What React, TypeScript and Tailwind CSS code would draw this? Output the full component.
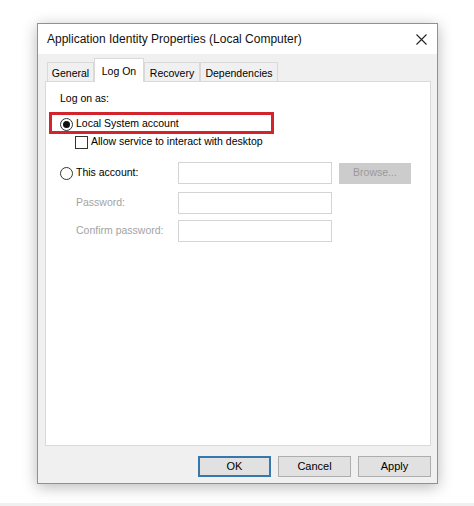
import React from "react";

const font = { fontFamily: '"Liberation Sans", Arial, sans-serif' };

const Radio: React.FC<{ checked?: boolean }> = ({ checked }) => (
	<span className="flex h-[13px] w-[13px] shrink-0 items-center justify-center rounded-full border border-[#333] bg-white">
		{checked && <span className="h-[7px] w-[7px] rounded-full bg-[#111]" />}
	</span>
);

const TextBox: React.FC = () => (
	<div className="h-[22px] w-[154px] border border-[#d4d4d4] bg-white" />
);

const Tab: React.FC<{ label: string; width: string; active?: boolean }> = ({ label, width, active }) =>
	active ? (
		<div className={`relative z-10 -mb-px flex h-[24px] ${width} items-start justify-center border border-b-0 border-[#d9d9d9] bg-white pt-[5px]`}>
			{label}
		</div>
	) : (
		<div className={`flex h-[19px] ${width} items-start justify-center border border-b-0 border-[#d9d9d9] bg-[#f0f0f0] pt-[3px]`}>
			{label}
		</div>
	);

const DialogButton: React.FC<{ label: string; primary?: boolean }> = ({ label, primary }) => (
	<div
		className={`flex h-[21px] w-[73px] items-center justify-center bg-[#e1e1e1] text-[11px] ${
			primary ? "border-2 border-[#3677ad]" : "border border-[#adadad]"
		}`}
	>
		{label}
	</div>
);

export default function App() {
	return (
		<div className="flex h-[506px] w-[474px] flex-col bg-white text-[10.5px] text-black" style={font}>
			<div className="pl-[37px] pt-[23px]">
				<div className="flex h-[461px] w-[401px] flex-col border border-[#7a98ab] bg-[#f0f0f0] shadow-[0_3px_14px_rgba(0,0,0,0.28)]">
					{/* Title bar */}
					<div className="flex h-[30px] items-center justify-between bg-white pl-[9px] pr-[10px]">
						<span className="text-[12px] text-[#111]">Application Identity Properties (Local Computer)</span>
						<svg width="11" height="11" viewBox="0 0 11 11" className="mt-px">
							<path d="M0.5 0.5 L10.5 10.5 M10.5 0.5 L0.5 10.5" stroke="#222" strokeWidth="1.1" />
						</svg>
					</div>

					<div className="flex flex-1 flex-col pl-[7px] pr-[6px] pt-[4px]">
						{/* Tabs */}
						<div className="flex h-[23px] items-end pl-[2px]">
							<Tab label="General" width="w-[47px]" />
							<Tab label="Log On" width="w-[50px]" active />
							<Tab label="Recovery" width="w-[56px]" />
							<Tab label="Dependencies" width="w-[78px]" />
						</div>

						{/* Tab panel */}
						<div className="flex h-[365px] flex-col border border-[#d9d9d9] bg-white pl-[14px] pt-[10px]">
							<div className="h-[13px] leading-[13px]">Log on as:</div>

							<div className="relative mt-[11px] flex h-[16px] items-center gap-[3px]">
								<Radio checked />
								<span>Local System account</span>
								<div className="pointer-events-none absolute left-[-11px] top-[-4px] h-[22px] w-[225px] border-[3px] border-[#d3232c]" />
							</div>

							<div className="mt-[2px] flex h-[16px] items-center gap-[3px] pl-[15px]">
								<span className="h-[13px] w-[13px] shrink-0 border border-[#333] bg-white" />
								<span>Allow service to interact with desktop</span>
							</div>

							<div className="mt-[12px] flex h-[22px] items-center">
								<div className="flex w-[118px] items-center gap-[3px]">
									<Radio />
									<span>This account:</span>
								</div>
								<TextBox />
								<div className="ml-[7px] flex h-[21px] w-[72px] items-center justify-center border border-[#cccccc] bg-[#cccccc] text-[#9a9a9a]">
									Browse...
								</div>
							</div>

							<div className="mt-[8px] flex h-[22px] items-center">
								<div className="w-[118px] pl-[16px] text-[#a3a3a3]">Password:</div>
								<TextBox />
							</div>

							<div className="mt-[6px] flex h-[22px] items-center">
								<div className="w-[118px] pl-[16px] text-[#a3a3a3]">Confirm password:</div>
								<TextBox />
							</div>
						</div>

						{/* Buttons */}
						<div className="mt-[10px] flex justify-end gap-[7px]">
							<DialogButton label="OK" primary />
							<DialogButton label="Cancel" />
							<DialogButton label="Apply" />
						</div>
					</div>
				</div>
			</div>
			<div className="flex-1" />
			<div className="h-[3px] bg-[#f0f0f0]" />
		</div>
	);
}
